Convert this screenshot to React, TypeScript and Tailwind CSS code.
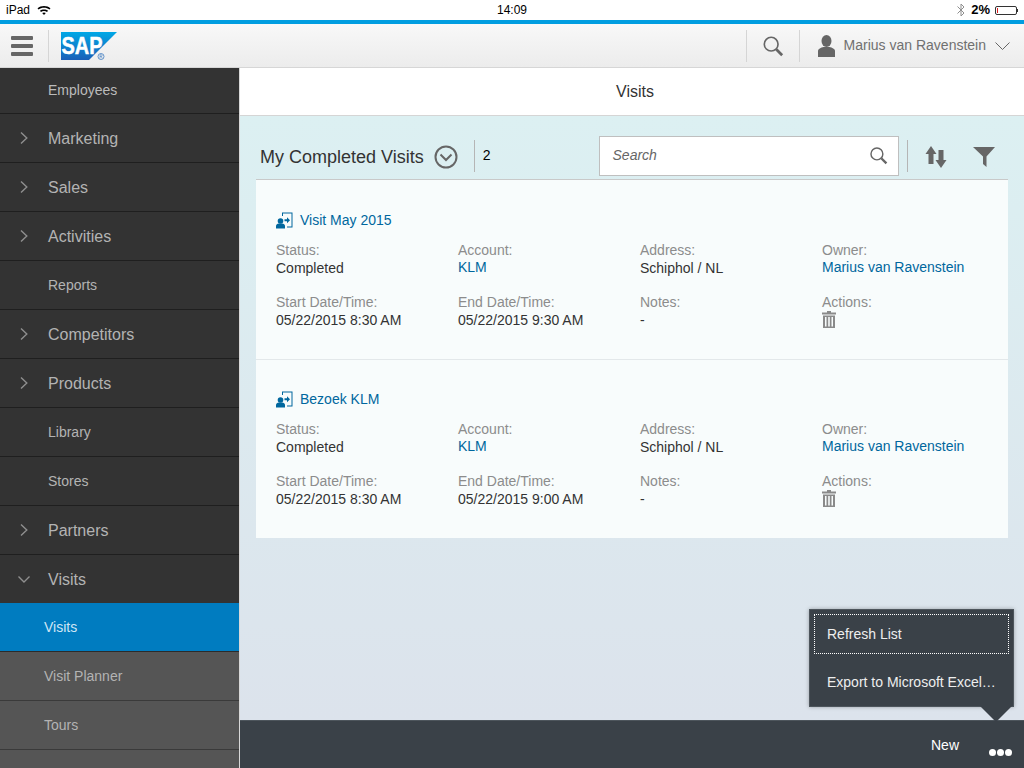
type NavItem = {
  label: string
  arrow?: "right" | "down"
}

const NAV: NavItem[] = [
  { label: "Marketing", arrow: "right" },
  { label: "Sales", arrow: "right" },
  { label: "Activities", arrow: "right" },
  { label: "Reports" },
  { label: "Competitors", arrow: "right" },
  { label: "Products", arrow: "right" },
  { label: "Library" },
  { label: "Stores" },
  { label: "Partners", arrow: "right" },
]

const SUBNAV = ["Visit Planner", "Tours"]

type Visit = {
  title: string
  end: string
}

const VISITS: Visit[] = [
  { title: "Visit May 2015", end: "05/22/2015 9:30 AM" },
  { title: "Bezoek KLM", end: "05/22/2015 9:00 AM" },
]

function Search({ className }: { className: string }) {
  return (
    <svg viewBox="0 0 24 24" className={className}>
      <circle cx="10" cy="10" r="7.5" fill="none" stroke="currentColor" strokeWidth="1.8" />
      <path d="M15.5 15.5L22 22" stroke="currentColor" strokeWidth="3" />
    </svg>
  )
}

function VisitIcon() {
  return (
    <svg viewBox="0 0 17 17" className="h-[17px] w-[17px] text-[#00679e]">
      <path d="M6 1.5V0.5H16.5V15.5H11V14.5H15.5V1.5H7V4H6Z" fill="currentColor" />
      <path d="M8.5 7.2H11V5.2L14 8.2L11 11.2V9.2H8.5Z" fill="currentColor" />
      <circle cx="4.5" cy="9" r="2.8" fill="currentColor" />
      <path d="M0 16.5V14C0 12.6 1.4 11.8 2.8 11.5H6.2C7.6 11.8 9 12.6 9 14V16.5Z" fill="currentColor" />
    </svg>
  )
}

function Field({
  label,
  value,
  link,
}: {
  label: string
  value: string
  link?: boolean
}) {
  return (
    <div className="w-[182px] shrink-0">
      <div className="h-[18px] text-[14px] leading-[18px] text-[#8c8c8c]">{label}</div>
      {link ? (
        <div className="-mt-px h-[19px] text-[14px] leading-[18px] text-[#00679e]">{value}</div>
      ) : (
        <div className="h-[18px] text-[14px] leading-[18px] text-[#333]">{value}</div>
      )}
    </div>
  )
}

function VisitCard({ visit, first }: { visit: Visit; first?: boolean }) {
  return (
    <div className={`h-[179px] border-t pl-5 pt-[31px] ${first ? "border-transparent" : "border-[#e3e8ea]"}`}>
      <div className="flex h-[17px] items-center gap-[7px]">
        <VisitIcon />
        <span className="text-[14px] text-[#00679e]">{visit.title}</span>
      </div>
      <div className="mt-[12px] flex">
        <Field label="Status:" value="Completed" />
        <Field label="Account:" value="KLM" link />
        <Field label="Address:" value="Schiphol / NL" />
        <Field label="Owner:" value="Marius van Ravenstein" link />
      </div>
      <div className="mt-[16px] flex">
        <Field label="Start Date/Time:" value="05/22/2015 8:30 AM" />
        <Field label="End Date/Time:" value={visit.end} />
        <Field label="Notes:" value="-" />
        <div className="w-[150px]">
          <div className="h-[18px] text-[14px] leading-[18px] text-[#8c8c8c]">Actions:</div>
          <svg viewBox="0 0 14 17" className="h-[17px] w-[14px] text-[#8a8a8a]">
            <path d="M5 0H9V1.5H14V3.5H0V1.5H5ZM1 4.5H13V17H1ZM3 6V15.5H4.5V6ZM6.2 6V15.5H7.8V6ZM9.5 6V15.5H11V6Z" fill="currentColor" fillRule="evenodd" />
          </svg>
        </div>
      </div>
    </div>
  )
}

export default function App() {
  return (
    <div className="flex h-[768px] w-[1024px] flex-col overflow-hidden bg-white font-['Liberation_Sans',Arial,sans-serif]">
      {/* ios status bar */}
      <div className="flex h-[20px] items-center justify-between bg-white pl-[6px] pr-[6px] text-[12px] text-black">
        <div className="flex w-[200px] items-center gap-[7px]">
          <span>iPad</span>
          <svg viewBox="0 0 14 10" className="h-[10px] w-[14px]">
            <path d="M0.5 3.4C4 0.2 10 0.2 13.5 3.4L12.4 4.6C9.5 2 4.5 2 1.6 4.6Z" fill="black" />
            <path d="M2.9 5.8C5 3.9 9 3.9 11.1 5.8L10 7C8.4 5.6 5.6 5.6 4 7Z" fill="black" />
            <path d="M5.2 8.1C6.2 7.3 7.8 7.3 8.8 8.1L7 10Z" fill="black" />
          </svg>
        </div>
        <span className="font-medium">14:09</span>
        <div className="flex w-[200px] items-center justify-end">
          <svg viewBox="0 0 8 14" className="mr-[6px] h-[14px] w-[8px] text-[#8e8e8e]">
            <path d="M0.5 3.5L7 10L4 13V1L7 4L0.5 10.5" fill="none" stroke="currentColor" strokeWidth="1" />
          </svg>
          <span className="mr-[5px] text-[13px] font-bold">2%</span>
          <div className="flex items-center">
            <div className="flex h-[9px] w-[22px] items-center rounded-[2px] border border-[#333] pl-[1px]">
              <div className="h-[5px] w-[1px] bg-[#e01b1b]" />
            </div>
            <div className="h-[3px] w-[1px] bg-[#333]" />
          </div>
        </div>
      </div>
      <div className="h-[4px] bg-[#009de0]" />

      {/* shell header */}
      <div className="flex h-[44px] items-center border-b border-[#d6d6d6] bg-gradient-to-b from-[#f8f8f8] to-[#ececec]">
        <div className="ml-[11px] flex w-[22px] flex-col gap-[4px]">
          <div className="h-[4px] rounded-[1px] bg-[#666]" />
          <div className="h-[4px] rounded-[1px] bg-[#666]" />
          <div className="h-[4px] rounded-[1px] bg-[#666]" />
        </div>
        <div className="ml-[15px] h-[32px] w-px bg-[#d5d5d5]" />
        <svg viewBox="0 0 56 28" className="ml-[12px] h-[28px] w-[56px]">
          <defs>
            <linearGradient id="sapBlue" x1="0" y1="0" x2="0" y2="1">
              <stop offset="0" stopColor="#00a8e6" />
              <stop offset="1" stopColor="#1a5fb8" />
            </linearGradient>
          </defs>
          <path d="M0 0H56L28 28H0Z" fill="url(#sapBlue)" />
          <text x="0.5" y="22" fontSize="24" fontWeight="700" fill="white" stroke="white" strokeWidth="0.5" fontFamily="Liberation Sans" textLength="41" lengthAdjust="spacingAndGlyphs">SAP</text>
          {/* registered mark of the logo */}
          <circle cx="40" cy="24.5" r="3" fill="none" stroke="#2a6ebb" strokeWidth="0.7" />
          <path d="M39 26.3V22.8H40.4C41.4 22.8 41.4 24.5 40.4 24.5H39M40.3 24.5L41.2 26.3" fill="none" stroke="#2a6ebb" strokeWidth="0.5" />
        </svg>

        <div className="ml-auto flex h-full items-center text-[#666]">
          <div className="h-[32px] w-px bg-[#d5d5d5]" />
          <Search className="ml-[15px] h-[22px] w-[22px]" />
          <div className="ml-[15px] h-[32px] w-px bg-[#d5d5d5]" />
          <svg viewBox="0 0 17 22" className="ml-[18px] h-[22px] w-[17px]">
            <ellipse cx="8.5" cy="6" rx="5" ry="6" fill="currentColor" />
            <path d="M0 22V16C0 14 3 12.5 5.5 12H11.5C14 12.5 17 14 17 16V22Z" fill="currentColor" />
          </svg>
          <span className="ml-[9px] text-[14px] text-[#707070]">Marius van Ravenstein</span>
          <svg viewBox="0 0 15 8" className="ml-[9px] mr-[14px] h-[8px] w-[15px]">
            <path d="M0.5 0.5L7.5 7.5L14.5 0.5" fill="none" stroke="currentColor" strokeWidth="1" />
          </svg>
        </div>
      </div>

      <div className="flex min-h-0 flex-1">
        {/* side nav */}
        <div className="w-[240px] shrink-0 border-r border-[#d8d8d8] bg-[#333]">
          <div className="flex h-[46px] items-center border-b border-[#1f1f1f] pb-[1px] pl-[48px] text-[14px] text-[#bbb]">
            Employees
          </div>
          {NAV.map((item) => (
            <div key={item.label} className="flex h-[49px] items-center border-b border-[#1f1f1f] text-[#b3b3b3]">
              <div className="flex w-[48px] justify-center">
                {item.arrow === "right" && (
                  <svg viewBox="0 0 8 12" className="h-[12px] w-[8px] text-[#8f8f8f]">
                    <path d="M1 0.5L6.8 6L1 11.5" fill="none" stroke="currentColor" strokeWidth="1.4" />
                  </svg>
                )}
              </div>
              <span className={item.arrow ? "mt-[1px] text-[16px]" : "text-[14px]"}>{item.label}</span>
            </div>
          ))}
          <div className="flex h-[48px] items-center text-[#b3b3b3]">
            <div className="flex w-[48px] justify-center">
              <svg viewBox="0 0 12 7" className="h-[7px] w-[12px] text-[#8f8f8f]">
                <path d="M0.5 0.5L6 6L11.5 0.5" fill="none" stroke="currentColor" strokeWidth="1.4" />
              </svg>
            </div>
            <span className="mt-[1px] text-[16px]">Visits</span>
          </div>
          <div className="flex h-[49px] items-center border-b border-[#2b2b2b] bg-[#007cc0] pl-[44px] text-[14px] text-[#cfe6f5]">
            Visits
          </div>
          {SUBNAV.map((label) => (
            <div key={label} className="flex h-[49px] items-center border-b border-[#3a3a3a] bg-[#555] pl-[44px] text-[14px] text-[#b3b3b3]">
              {label}
            </div>
          ))}
          <div className="h-[18px] bg-[#555]" />
        </div>

        {/* main */}
        <div className="relative flex min-w-0 flex-1 flex-col">
          <div className="flex h-[48px] shrink-0 items-center justify-center border-b border-[#d5d5d5] bg-white pl-[6px] text-[16px] text-[#333]">
            Visits
          </div>
          <div className="flex-1 bg-gradient-to-b from-[#dcf0f2] to-[#dce3ec] px-[16px]">
            <div className="flex h-[64px] items-center border-b border-[#c9c9c9] pt-[17px]">
              <span className="ml-[4px] mt-[2px] text-[18px] text-[#333]">My Completed Visits</span>
              <svg viewBox="0 0 24 24" className="ml-[10px] mt-[2px] h-[24px] w-[24px] text-[#666]">
                <circle cx="12" cy="12" r="10.5" fill="none" stroke="currentColor" strokeWidth="2" />
                <path d="M6.5 9.5L12 15L17.5 9.5" fill="none" stroke="currentColor" strokeWidth="2" />
              </svg>
              <div className="ml-[16px] h-[32px] w-px bg-[#b5b5b5]" />
              <span className="mb-[2px] ml-[8px] text-[14px] text-black">2</span>
              <div className="ml-[108px] flex h-[40px] w-[300px] items-center border border-[#bfbfbf] bg-white pl-[13px] pr-[10px]">
                <span className="mb-[1px] flex-1 text-[14px] italic text-[#666]">Search</span>
                <Search className="mb-[1px] h-[19px] w-[19px] text-[#666]" />
              </div>
              <div className="ml-[8px] h-[32px] w-px bg-[#b5b5b5]" />
              <svg viewBox="0 0 22 22" className="ml-[17px] mt-[2px] h-[22px] w-[22px] text-[#666]">
                <path d="M6 0L11.5 8H8.5V18H3.5V8H0.5Z" fill="currentColor" />
                <path d="M16 22L21.5 14H18.5V4H13.5V14H10.5Z" fill="currentColor" />
              </svg>
              <svg viewBox="0 0 22 20" className="ml-[26px] mt-[2px] h-[20px] w-[22px] text-[#666]">
                <path d="M0 0H22L13.5 9.5V20L10 17V9.5Z" fill="currentColor" />
              </svg>
            </div>
            <div className="bg-[#f8fcfc]">
              {VISITS.map((v, i) => (
                <VisitCard key={v.title} visit={v} first={i === 0} />
              ))}
            </div>
          </div>

          {/* footer */}
          <div className="flex h-[48px] shrink-0 items-center justify-end border-t border-[#4d555c] bg-[#3a4148] pr-[12px]">
            <span className="mt-[1px] text-[14px] text-white">New</span>
            <div className="ml-[30px] mt-[16px] flex gap-[1px]">
              <div className="h-[7px] w-[7px] rounded-full bg-white" />
              <div className="h-[7px] w-[7px] rounded-full bg-white" />
              <div className="h-[7px] w-[7px] rounded-full bg-white" />
            </div>
          </div>

          {/* action sheet popover */}
          <div className="absolute bottom-[61px] right-[10px] w-[205px] border border-[#4d555c] bg-[#3a4148] px-[4px] pt-[4px] shadow-[0_0_4px_rgba(0,0,0,0.3)]">
            <div className="flex h-[40px] items-center border border-dotted border-white pl-[12px] text-[14px] text-[#eee]">
              Refresh List
            </div>
            <div className="flex h-[52px] items-center pl-[13px] pt-[5px] text-[14px] text-[#eee]">
              Export to Microsoft Excel…
            </div>
            <div className="absolute right-[1px] top-full h-0 w-0 border-x-[16px] border-t-[16px] border-x-transparent border-t-[#3a4148]" />
          </div>
        </div>
      </div>
    </div>
  )
}
